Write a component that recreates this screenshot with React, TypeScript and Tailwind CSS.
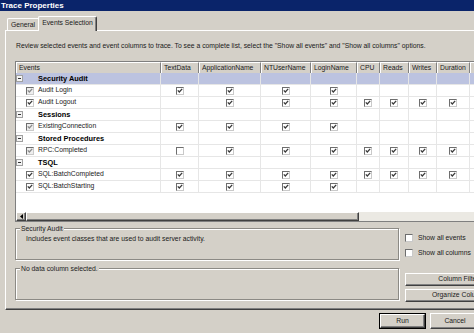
import React from "react";

type Row =
  | { kind: "cat"; name: string; selected?: boolean }
  | { kind: "evt"; name: string; dim?: boolean; cells: (0 | 1 | 2)[] };

// 0 = nothing, 1 = checked, 2 = empty box
const rows: Row[] = [
  { kind: "cat", name: "Security Audit", selected: true },
  { kind: "evt", name: "Audit Login", dim: true, cells: [1, 1, 1, 1, 0, 0, 0, 0, 0] },
  { kind: "evt", name: "Audit Logout", cells: [0, 1, 1, 1, 1, 1, 1, 1, 0] },
  { kind: "cat", name: "Sessions" },
  { kind: "evt", name: "ExistingConnection", dim: true, cells: [1, 1, 1, 1, 0, 0, 0, 0, 0] },
  { kind: "cat", name: "Stored Procedures" },
  { kind: "evt", name: "RPC:Completed", dim: true, cells: [2, 1, 1, 1, 1, 1, 1, 1, 0] },
  { kind: "cat", name: "TSQL" },
  { kind: "evt", name: "SQL:BatchCompleted", cells: [1, 1, 1, 1, 1, 1, 1, 1, 0] },
  { kind: "evt", name: "SQL:BatchStarting", cells: [1, 1, 1, 1, 0, 0, 0, 0, 0] },
];

const columns = ["TextData", "ApplicationName", "NTUserName", "LoginName", "CPU", "Reads", "Writes", "Duration", ""];

const gridCols = "grid grid-cols-[145px_38px_62px_50px_46px_23px_29px_28px_33px_60px]";

function Check({ checked, dim }: { checked: boolean; dim?: boolean }) {
  return (
    <span
      className={`flex h-[8px] w-[8px] items-center justify-center border border-t-[#6e6e6e] border-l-[#6e6e6e] border-b-[#c9c9c9] border-r-[#c9c9c9] ${
        dim ? "bg-[#eeeeee]" : "bg-white"
      }`}
    >
      {checked && (
        <svg width="6" height="6" viewBox="0 0 6 6">
          <polyline
            points="0.8,2.4 2.3,4 5.2,0.9"
            fill="none"
            stroke={dim ? "#8a8a8a" : "#3a3a3a"}
            strokeWidth="1.3"
          />
        </svg>
      )}
    </span>
  );
}

function Raised({ className = "", children }: { className?: string; children?: React.ReactNode }) {
  return (
    <div
      className={`flex items-center justify-center whitespace-nowrap border border-t-white border-l-white border-b-[#404040] border-r-[#404040] bg-[#d4d0c8] shadow-[inset_-1px_-1px_0_#808080] ${className}`}
    >
      {children}
    </div>
  );
}

function GroupBox({ label, children, className = "" }: { label: string; children?: React.ReactNode; className?: string }) {
  return (
    <div
      className={`relative border border-[#8c8a85] shadow-[inset_1px_1px_0_#ffffff,1px_1px_0_#ffffff] ${className}`}
    >
      <span className="absolute -top-[5px] left-[4px] bg-[#d4d0c8] px-[1px] leading-[9px] text-[#222]">{label}</span>
      {children}
    </div>
  );
}

export default function App() {
  return (
    <div className="h-[333px] w-[474px] overflow-hidden bg-[#d4d0c8] font-['Liberation_Sans',Arial,sans-serif] text-[6.8px] text-[#1a1a1a]">
      <div className="w-[560px]">
        {/* title bar */}
        <div className="flex h-[11px] items-center bg-[#0a246a] pl-[1px] text-[8px] font-bold leading-none text-white">
          Trace Properties
        </div>

        {/* tabs */}
        <div className="flex h-[19px] items-end pl-[7px]">
          <div className="flex h-[12px] w-[31px] items-center justify-center rounded-tl-[2px] border-t border-l border-t-white border-l-white pt-[1px]">
            General
          </div>
          <div className="relative z-10 -mb-[1px] flex h-[15px] w-[59px] items-center justify-center rounded-t-[2px] border-t border-l border-r border-t-white border-l-white border-r-[#404040] bg-[#d4d0c8] pb-[2px] shadow-[inset_-1px_0_0_#808080]">
            Events Selection
          </div>
        </div>

        {/* tab panel */}
        <div className="ml-[5px] h-[280px] border-t border-l border-b border-t-white border-l-white border-b-[#404040] pl-[9px] shadow-[inset_0_-1px_0_#808080]">
          <div className="mt-[10px] ml-[1px] h-[10px] leading-[10px]">
            Review selected events and event columns to trace. To see a complete list, select the "Show all events" and "Show all columns" options.
          </div>

          {/* event grid */}
          <div className="mt-[10px] flex h-[161px] w-[520px] flex-col border border-[#7f7f7f] bg-white">
            <div className={`${gridCols} h-[11px]`}>
              <div className="flex items-center border border-t-white border-l-white border-b-[#808080] border-r-[#808080] bg-[#d4d0c8] pl-[2px]">
                Events
              </div>
              {columns.map((c, i) => (
                <div
                  key={i}
                  className="flex items-center overflow-hidden whitespace-nowrap border border-t-white border-l-white border-b-[#808080] border-r-[#808080] bg-[#d4d0c8] pl-[2px]"
                >
                  {c}
                </div>
              ))}
            </div>

            {rows.map((r) => (
              <div
                key={r.name}
                className={`${gridCols} h-[12px] ${r.kind === "cat" && r.selected ? "bg-[#bcc3e0]" : ""}`}
              >
                {r.kind === "cat" ? (
                  <div className="flex items-center border-r border-b border-[#e6e6e6]">
                    <span className="flex h-[7px] w-[7px] items-center justify-center border border-[#a0a0a0] bg-[#f4f4f4]">
                      <span className="h-px w-[3px] bg-[#333]" />
                    </span>
                    <span className="ml-[15px] text-[7.4px] font-bold leading-none text-black">{r.name}</span>
                  </div>
                ) : (
                  <div className="flex items-center border-r border-b border-[#e6e6e6]">
                    <span className="ml-[10px]">
                      <Check checked dim={r.dim} />
                    </span>
                    <span className="ml-[4px] leading-none">{r.name}</span>
                  </div>
                )}
                {columns.map((c, i) => (
                  <div key={i} className="flex items-center justify-center border-r border-b border-[#e6e6e6]">
                    {r.kind === "evt" && r.cells[i] !== 0 && <Check checked={r.cells[i] === 1} />}
                  </div>
                ))}
              </div>
            ))}

            <div className="flex-1" />

            {/* horizontal scrollbar */}
            <div className="flex h-[9px] bg-[#ebe9e3]">
              <Raised className="w-[10px]">
                <svg width="3" height="5" viewBox="0 0 3 5">
                  <polygon points="3,0 0,2.5 3,5" fill="#000" />
                </svg>
              </Raised>
              <Raised className="w-[333px]" />
            </div>
          </div>

          {/* lower area */}
          <div className="flex">
            <div className="w-[384px]">
              <GroupBox label="Security Audit" className="mt-[6px] h-[32px]">
                <div className="mt-[5px] ml-[10px] leading-[9px]">
                  Includes event classes that are used to audit server activity.
                </div>
              </GroupBox>
              <GroupBox label="No data column selected." className="mt-[8px] h-[32px]" />
            </div>
            <div className="ml-[6px] flex w-[130px] flex-col">
              <div className="mt-[11px] flex h-[10px] items-center gap-[5px]">
                <Check checked={false} />
                <span>Show all events</span>
              </div>
              <div className="mt-[5px] flex h-[10px] items-center gap-[5px]">
                <Check checked={false} />
                <span>Show all columns</span>
              </div>
              <Raised className="mt-[15px] h-[13px] w-[116px]">Column Filters...</Raised>
              <Raised className="mt-[3px] h-[13px] w-[116px]">Organize Columns...</Raised>
            </div>
          </div>
        </div>

        {/* dialog buttons */}
        <div className="mt-[3px] ml-[379px] flex gap-[4px]">
          <div className="border border-black">
            <Raised className="h-[14px] w-[45px]">Run</Raised>
          </div>
          <Raised className="h-[16px] w-[50px]">Cancel</Raised>
        </div>
      </div>
    </div>
  );
}
